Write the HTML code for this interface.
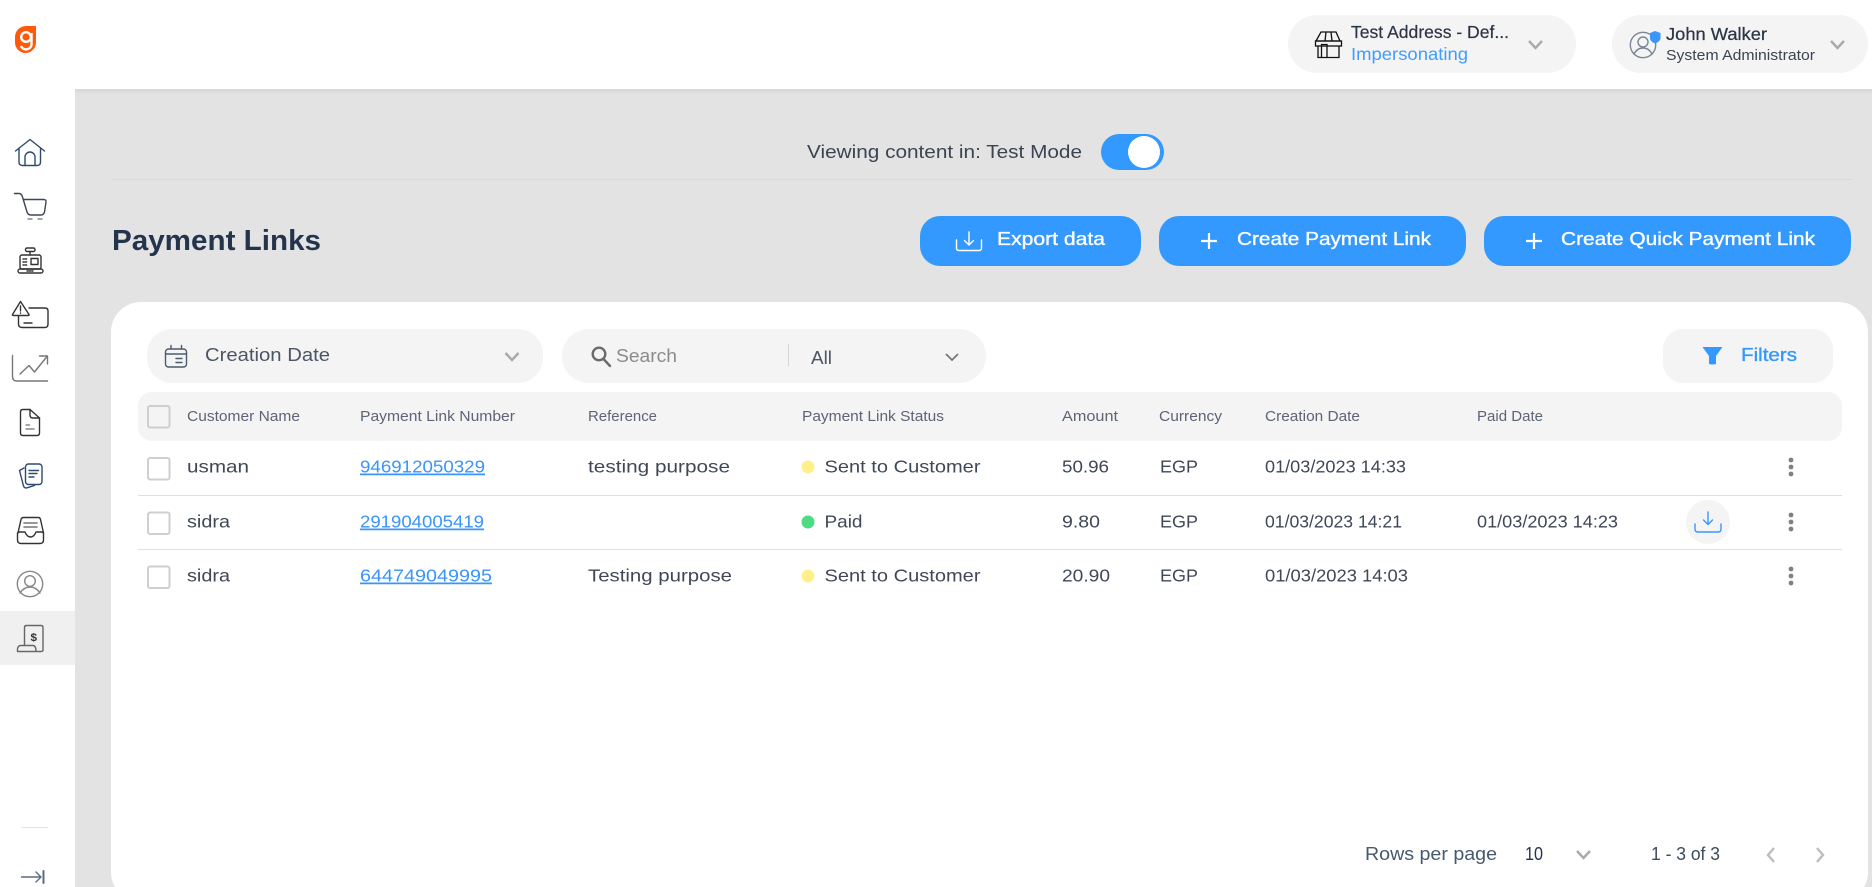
<!DOCTYPE html>
<html lang="en">
<head>
<meta charset="utf-8">
<title>Payment Links</title>
<style>
html,body{margin:0;padding:0;width:1872px;height:887px;overflow:hidden;background:#e3e3e3}
svg{display:block}
text{font-family:"Liberation Sans",sans-serif}
.h{font-size:15px;fill:#5b6575}
.r{font-size:17.5px;fill:#3f4856}
.l{font-size:17.5px;fill:#3a95fb;text-decoration:underline}
.b{font-size:18px;fill:#fff;stroke:#fff;stroke-width:.35}
.chev{fill:none;stroke:#a9a9a9;stroke-width:2.4}
.ic{fill:none;stroke-linecap:round;stroke-linejoin:round;stroke-width:1.4}
</style>
</head>
<body>
<svg xmlns="http://www.w3.org/2000/svg" width="1872" height="887" viewBox="0 0 1872 887">
<defs>
<linearGradient id="sh" x1="0" y1="0" x2="0" y2="1"><stop offset="0" stop-color="#d7d7d7"/><stop offset="1" stop-color="#e3e3e3"/></linearGradient>
</defs>
<rect width="1872" height="887" fill="#e3e3e3"/>
<rect x="75" y="89" width="1797" height="6" fill="url(#sh)"/>
<!-- header -->
<rect width="1872" height="89" fill="#fff"/>
<rect width="75" height="887" fill="#fff"/>
<!-- logo -->
<path d="M26 26H36V42.500A10.500 10.500 0 0 1 15 42.500V37A11 11 0 0 1 26 26Z" fill="#ff5a0a"/>
<circle cx="26" cy="37" r="4.800" fill="none" stroke="#fff" stroke-width="2.400"/>
<path d="M31.500 33V43A5.500 5.500 0 0 1 21 46" fill="none" stroke="#fff" stroke-width="2.400"/>
<!-- sidebar -->
<rect y="611" width="75" height="54" fill="#f0f0f0"/>
<g class="ic" stroke="#2e4a6e">
<path d="M15.500 151L30 139.500L44.500 151M19 148V162Q19 165.500 22.500 165.500H37Q40.500 165.500 40.500 162V148M25 165.500V157A5 5 0 0 1 35 157V165.500"/>
</g>
<g class="ic" stroke="#3c4654">
<path d="M14.500 193.500H19Q21.500 193.500 22.500 197L27 212Q28 215 31 215H41Q43.500 215 44.500 212L46 202Q46.500 199.500 43.500 199.500H24"/>
<path d="M28 219H32M38 219H42" stroke="#888"/>
</g>
<g class="ic" stroke="#333">
<rect x="25.500" y="248" width="9.500" height="3.500" rx="1.500"/>
<path d="M30 251.500V255"/>
<rect x="20" y="255" width="21" height="14" rx="2"/>
<rect x="18" y="269" width="25" height="4" rx="2"/>
<rect x="31" y="258.500" width="7" height="6"/>
<path d="M23 259h4M23 262h4M23 265h4M27 271h6" stroke-dasharray="1.200 1.200"/>
</g>
<g class="ic" stroke="#333">
<path d="M29 308H45Q48 308 48 311V324Q48 327.500 45 327.500H22Q18.500 327.500 18.500 324V316"/>
<path d="M20.500 301.500L29 314.500Q29.500 315.500 28 315.500H13.500Q12 315.500 12.500 314.500Z" fill="#fff"/>
<path d="M20.500 306V311M20.500 313V313.300M24 323H32"/>
</g>
<g class="ic" stroke="#777">
<path d="M12.500 355.500V376.500Q12.500 381 17 381H47.500"/>
<path d="M20 374L29 365.500L34.500 372L47 356.500M39.500 356H47.500V364"/>
</g>
<g class="ic" stroke="#333">
<path d="M30 409.500H23Q20.500 409.500 20.500 412V433Q20.500 435.500 23 435.500H37Q39.500 435.500 39.500 433V418Z"/>
<path d="M30 409.500V415Q30 418 33 418H39.500"/>
<path d="M26 425H29.500M26 429H34" stroke="#888"/>
</g>
<g class="ic" stroke="#2e4a6e">
<rect x="25.500" y="464" width="16.500" height="20.500" rx="3"/>
<path d="M24 468L19.500 470.500L23.500 486Q24.500 488.500 27 487.800L34.500 485.500"/>
<path d="M29 470.500H38.500M29 473.500H37M29 477H34"/>
</g>
<g class="ic" stroke="#333">
<path d="M18 533L21 519.500Q21.500 517.500 23.500 517.500H38.500Q40 517.500 40.500 519.500L43.500 533"/>
<path d="M17.500 533.500V540Q17.500 543.500 21 543.500H40Q43.500 543.500 43.500 540V533.500Q43.500 532 41.500 532H36Q34 537 30.500 537Q27 537 25 532H19.500Q17.500 532 17.500 533.500Z"/>
<path d="M24 523H37M24 527H37" stroke="#777" stroke-width="1.600"/>
</g>
<g class="ic" stroke="#888">
<circle cx="30" cy="584" r="12.700"/>
<circle cx="30" cy="581" r="5.300"/>
<path d="M20 593Q24 587 30 587Q36 587 40 593"/>
</g>
<g class="ic" stroke="#666">
<path d="M24.500 645V627.500Q24.500 625.500 26.500 625.500H41Q43 625.500 43 627.500V650Q43 651.500 41 651.500H37"/>
<path d="M17.500 651.500Q17 645.500 21 645.500H33Q36 645.500 36 651.500Z"/>
</g>
<text x="30.500" y="641" font-size="11" font-weight="700" fill="#333" textLength="6.500" lengthAdjust="spacingAndGlyphs">$</text>
<rect x="21" y="827" width="27" height="1" fill="#e3e3e3"/>
<g class="ic" stroke="#5b6b80" stroke-width="1.500">
<path d="M21.500 877H41M36 872L41 877L36 882"/>
<path d="M43.500 871V883" stroke-width="2"/>
</g>

<!-- store pill -->
<rect x="1288" y="15" width="288" height="58" rx="29" fill="#f4f4f4"/>
<g fill="none" stroke="#111" stroke-width="1.300">
<path d="M1321 32H1336L1340 41H1316ZM1326 32L1325 41M1331 32L1332 41"/>
<rect x="1315.500" y="41" width="26" height="5" />
<path d="M1318 46V57.500H1339V46M1321.500 57.500V44.500H1327V57.500"/>
</g>
<text x="1351" y="38" font-size="17.500" fill="#2a3546" stroke="#2a3546" stroke-width=".2" textLength="158" lengthAdjust="spacingAndGlyphs">Test Address - Def...</text>
<text x="1351" y="60" font-size="17.500" fill="#3f9dfd" textLength="117" lengthAdjust="spacingAndGlyphs">Impersonating</text>
<path class="chev" d="M1529 41L1535.500 48L1542 41"/>
<!-- user pill -->
<rect x="1612" y="15" width="256" height="58" rx="29" fill="#f4f4f4"/>
<g class="ic" stroke="#7a8694" stroke-width="1.200">
<circle cx="1643" cy="45" r="12.700"/>
<circle cx="1643" cy="42" r="5"/>
<path d="M1634 54Q1637 48 1643 48Q1649 48 1652 54"/>
</g>
<path d="M1655 31L1660.500 33V38Q1660.500 41.500 1655 43.500Q1650 41.500 1650 38V33Z" fill="#3a96fb"/>
<text x="1666" y="40" font-size="17.500" fill="#2a3546" stroke="#2a3546" stroke-width=".25" textLength="101" lengthAdjust="spacingAndGlyphs">John Walker</text>
<text x="1666" y="60" font-size="15" fill="#3b4452" textLength="149" lengthAdjust="spacingAndGlyphs">System Administrator</text>
<path class="chev" d="M1831 41L1837.500 48L1844 41"/>

<!-- test mode -->
<text x="807" y="158" font-size="18" fill="#3b4452" textLength="275" lengthAdjust="spacingAndGlyphs">Viewing content in: Test Mode</text>
<rect x="1101" y="134" width="63" height="36" rx="18" fill="#3399ff"/>
<circle cx="1144" cy="152" r="16" fill="#fff"/>
<rect x="111" y="179" width="1741" height="1" fill="#d9d9d9"/>

<!-- title + buttons -->
<text x="112" y="250" font-size="28.500" font-weight="700" fill="#25344d" textLength="209" lengthAdjust="spacingAndGlyphs">Payment Links</text>
<rect x="920" y="216" width="221" height="50" rx="20" fill="#3399ff"/>
<rect x="1159" y="216" width="307" height="50" rx="20" fill="#3399ff"/>
<rect x="1484" y="216" width="367" height="50" rx="20" fill="#3399ff"/>
<g class="ic" stroke="#fff" stroke-width="1.500">
<path d="M969 232V245M964.500 240.500L969 245L973.500 240.500"/>
<path d="M956.500 240V248Q956.500 250.500 959 250.500H979Q981.500 250.500 981.500 248V240"/>
</g>
<path d="M1209 233V249M1201 241H1217M1534 233V249M1526 241H1542" stroke="#fff" stroke-width="2.200" fill="none"/>
<text class="b" x="997" y="245" textLength="108" lengthAdjust="spacingAndGlyphs">Export data</text>
<text class="b" x="1237" y="245" textLength="194" lengthAdjust="spacingAndGlyphs">Create Payment Link</text>
<text class="b" x="1561" y="245" textLength="254" lengthAdjust="spacingAndGlyphs">Create Quick Payment Link</text>

<!-- card -->
<rect x="111" y="302" width="1757" height="600" rx="30" fill="#fff"/>
<rect x="147" y="329" width="396" height="54" rx="25" fill="#f4f4f4"/>
<g class="ic" stroke="#4d5b6d" stroke-width="1.500">
<rect x="165.500" y="349" width="21" height="18" rx="3"/>
<path d="M165.500 354H186.500M171 345.500V349M181.500 345.500V349M176 358.500H182M176 362.500H182"/>
</g>
<text x="205" y="361" font-size="18" fill="#4b5563" textLength="125" lengthAdjust="spacingAndGlyphs">Creation Date</text>
<path class="chev" d="M505.500 353L512 360L518.500 353"/>
<rect x="562" y="329" width="424" height="54" rx="27" fill="#f4f4f4"/>
<g fill="none" stroke="#6b6b6b" stroke-width="2.400">
<circle cx="599" cy="354" r="6.300"/>
<path d="M603.500 359L610 366" stroke-linecap="round"/>
</g>
<text x="616" y="362" font-size="18" fill="#8b8b8b" textLength="61" lengthAdjust="spacingAndGlyphs">Search</text>
<rect x="788" y="344" width="1" height="22" fill="#d5d5d5"/>
<text x="811" y="364" font-size="18" fill="#4b5563" textLength="21" lengthAdjust="spacingAndGlyphs">All</text>
<path d="M946 354L952 360L958 354" fill="none" stroke="#777" stroke-width="1.800"/>
<rect x="1663" y="329" width="170" height="54" rx="20" fill="#f4f4f4"/>
<path d="M1702.500 347H1722.500L1716 356V364Q1712.500 365 1709 364V356Z" fill="#3399ff"/>
<text x="1741" y="361" font-size="18" fill="#3399ff" stroke="#3399ff" stroke-width=".35" textLength="56" lengthAdjust="spacingAndGlyphs">Filters</text>

<!-- table head -->
<rect x="138" y="392" width="1704" height="49" rx="14" fill="#f4f4f4"/>
<rect x="148" y="406" width="21.500" height="21.500" rx="2" fill="none" stroke="#cfcfcf" stroke-width="2"/>
<text class="h" x="187" y="421" textLength="113" lengthAdjust="spacingAndGlyphs">Customer Name</text>
<text class="h" x="360" y="421" textLength="155" lengthAdjust="spacingAndGlyphs">Payment Link Number</text>
<text class="h" x="588" y="421" textLength="69" lengthAdjust="spacingAndGlyphs">Reference</text>
<text class="h" x="802" y="421" textLength="142" lengthAdjust="spacingAndGlyphs">Payment Link Status</text>
<text class="h" x="1062" y="421" textLength="56" lengthAdjust="spacingAndGlyphs">Amount</text>
<text class="h" x="1159" y="421" textLength="63" lengthAdjust="spacingAndGlyphs">Currency</text>
<text class="h" x="1265" y="421" textLength="95" lengthAdjust="spacingAndGlyphs">Creation Date</text>
<text class="h" x="1477" y="421" textLength="66" lengthAdjust="spacingAndGlyphs">Paid Date</text>

<!-- rows -->
<rect x="138" y="495" width="1704" height="1" fill="#e0e0e0"/>
<rect x="138" y="549" width="1704" height="1" fill="#e0e0e0"/>

<g fill="none" stroke="#cfcfcf" stroke-width="2">
<rect x="148" y="458" width="21.500" height="21.500" rx="2"/>
<rect x="148" y="512.500" width="21.500" height="21.500" rx="2"/>
<rect x="148" y="566.500" width="21.500" height="21.500" rx="2"/>
</g>

<text class="r" x="187" y="472.500" textLength="62" lengthAdjust="spacingAndGlyphs">usman</text>
<text class="l" x="360" y="472.500" textLength="125" lengthAdjust="spacingAndGlyphs">946912050329</text>
<text class="r" x="588" y="472.500" textLength="142" lengthAdjust="spacingAndGlyphs">testing purpose</text>
<circle cx="808" cy="467" r="6.500" fill="#fff08c"/>
<text class="r" x="824.500" y="472.500" textLength="156" lengthAdjust="spacingAndGlyphs">Sent to Customer</text>
<text class="r" x="1062" y="472.500" textLength="47" lengthAdjust="spacingAndGlyphs">50.96</text>
<text class="r" x="1160" y="472.500" textLength="38" lengthAdjust="spacingAndGlyphs">EGP</text>
<text class="r" x="1265" y="472.500" textLength="141" lengthAdjust="spacingAndGlyphs">01/03/2023 14:33</text>

<text class="r" x="187" y="527.500" textLength="43" lengthAdjust="spacingAndGlyphs">sidra</text>
<text class="l" x="360" y="527.500" textLength="124" lengthAdjust="spacingAndGlyphs">291904005419</text>
<circle cx="808" cy="522" r="6.500" fill="#4cdc82"/>
<text class="r" x="824.500" y="527.500" textLength="38" lengthAdjust="spacingAndGlyphs">Paid</text>
<text class="r" x="1062" y="527.500" textLength="38" lengthAdjust="spacingAndGlyphs">9.80</text>
<text class="r" x="1160" y="527.500" textLength="38" lengthAdjust="spacingAndGlyphs">EGP</text>
<text class="r" x="1265" y="527.500" textLength="137" lengthAdjust="spacingAndGlyphs">01/03/2023 14:21</text>
<text class="r" x="1477" y="527.500" textLength="141" lengthAdjust="spacingAndGlyphs">01/03/2023 14:23</text>
<circle cx="1708" cy="522" r="22" fill="#f4f4f4"/>
<g class="ic" stroke="#3a96fb" stroke-width="2.200">
<path d="M1708 512V524M1703.500 520L1708 524.500L1712.500 520"/>
<path d="M1695 524V529Q1695 532 1698 532H1718Q1721 532 1721 529V524"/>
</g>

<text class="r" x="187" y="581.500" textLength="43" lengthAdjust="spacingAndGlyphs">sidra</text>
<text class="l" x="360" y="581.500" textLength="132" lengthAdjust="spacingAndGlyphs">644749049995</text>
<text class="r" x="588" y="581.500" textLength="144" lengthAdjust="spacingAndGlyphs">Testing purpose</text>
<circle cx="808" cy="576" r="6.500" fill="#fff08c"/>
<text class="r" x="824.500" y="581.500" textLength="156" lengthAdjust="spacingAndGlyphs">Sent to Customer</text>
<text class="r" x="1062" y="581.500" textLength="48" lengthAdjust="spacingAndGlyphs">20.90</text>
<text class="r" x="1160" y="581.500" textLength="38" lengthAdjust="spacingAndGlyphs">EGP</text>
<text class="r" x="1265" y="581.500" textLength="143" lengthAdjust="spacingAndGlyphs">01/03/2023 14:03</text>

<g fill="#808080">
<circle cx="1791" cy="460" r="2.400"/><circle cx="1791" cy="467" r="2.400"/><circle cx="1791" cy="474" r="2.400"/>
<circle cx="1791" cy="515" r="2.400"/><circle cx="1791" cy="522" r="2.400"/><circle cx="1791" cy="529" r="2.400"/>
<circle cx="1791" cy="569" r="2.400"/><circle cx="1791" cy="576" r="2.400"/><circle cx="1791" cy="583" r="2.400"/>
</g>

<!-- pagination -->
<text x="1365" y="860" font-size="18" fill="#46596e" textLength="132" lengthAdjust="spacingAndGlyphs">Rows per page</text>
<text x="1525" y="860" font-size="18" fill="#25344d" textLength="18" lengthAdjust="spacingAndGlyphs">10</text>
<path class="chev" d="M1577 851L1583.500 858L1590 851"/>
<text x="1651" y="860" font-size="18" fill="#3b4a5c" textLength="69" lengthAdjust="spacingAndGlyphs">1 - 3 of 3</text>
<path d="M1774 848L1768 855L1774 862M1817 848L1823 855L1817 862" fill="none" stroke="#bdbdbd" stroke-width="2.400"/>
</svg>
</body>
</html>
